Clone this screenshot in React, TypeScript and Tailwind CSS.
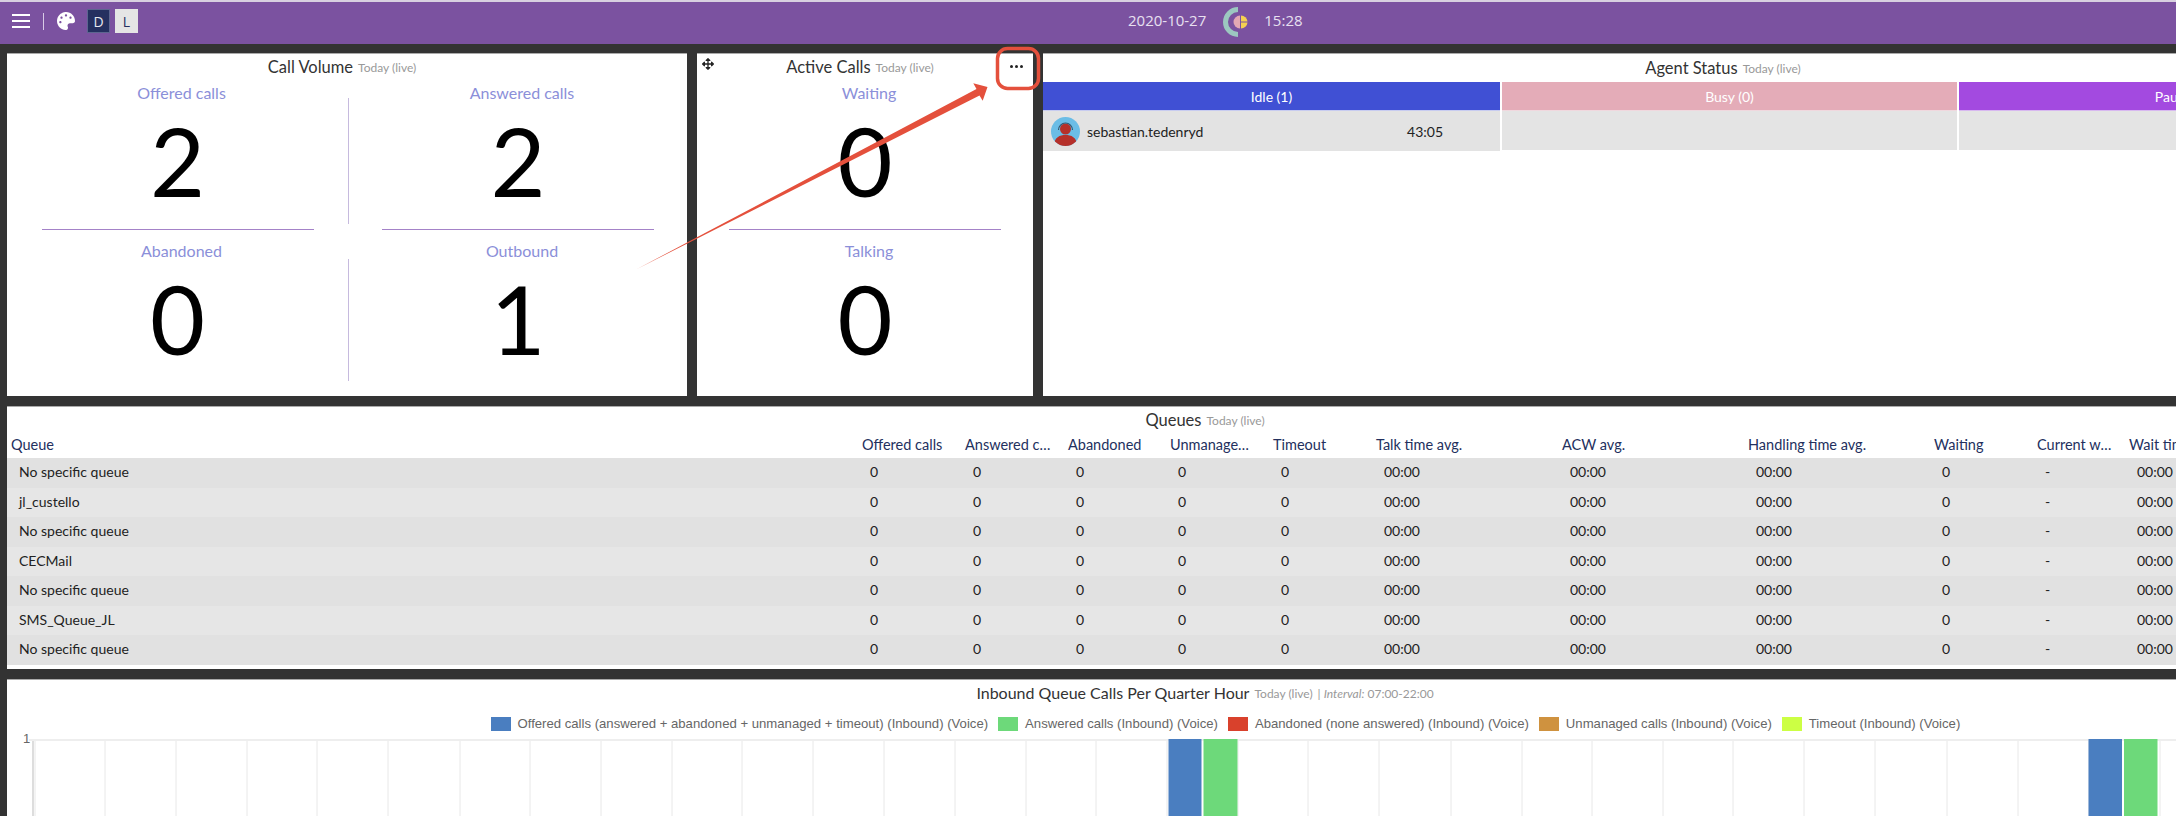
import { FaArrowsAlt, FaPalette } from "react-icons/fa";

const rows = ["No specific queue", "jl_custello", "No specific queue", "CECMail", "No specific queue", "SMS_Queue_JL", "No specific queue"];
const cols = ["Offered calls", "Answered calls", "Abandoned", "Unmanaged calls", "Timeout", "Talk time avg.", "ACW avg.", "Handling time avg.", "Waiting", "Current wait time", "Wait time"];
const vals = ["0", "0", "0", "0", "0", "00:00", "00:00", "00:00", "0", "-", "00:00"];
const gridLines = [35, 105, 176, 247, 317, 388, 460, 530, 601, 672, 742, 813, 884, 955, 1026, 1096, 1167, 1238, 1308, 1379, 1451, 1522, 1592, 1663, 1733, 1804, 1875, 1947, 2018, 2089, 2160];
const legend = [
  { color: "bg-[#4a7ec0]", label: "Offered calls (answered + abandoned + unmanaged + timeout) (Inbound) (Voice)" },
  { color: "bg-[#6dd97a]", label: "Answered calls (Inbound) (Voice)" },
  { color: "bg-[#d9412c]", label: "Abandoned (none answered) (Inbound) (Voice)" },
  { color: "bg-[#cf923f]", label: "Unmanaged calls (Inbound) (Voice)" },
  { color: "bg-[#ccff44]", label: "Timeout (Inbound) (Voice)" },
];

function Title({ name, extra }: { name: string; extra?: boolean }) {
  return (
    <div className="flex h-[26px] items-center justify-center gap-[5px] pr-[10px]">
      <span className={extra ? "text-[16px] text-[#333]" : "text-[16.5px] text-[#333]"}>{name}</span>
      <span className="mt-[2px] text-[12px] text-[#999]">Today (live)</span>
      {extra && (
        <span className="mt-[2px] text-[12px] text-[#999]">
          | <i>Interval:</i> 07:00-22:00
        </span>
      )}
    </div>
  );
}

function Stat({ label, value, lower }: { label: string; value: string; lower?: boolean }) {
  return (
    <div className={lower ? "flex flex-col items-center pt-[8px]" : "flex flex-col items-center"}>
      <div className="flex h-[28px] items-center pb-[2px] pl-2 text-[16px] text-[#8b8fd9]">{label}</div>
      <div className="h-[104px] text-[95px] leading-[104px] text-black">{value}</div>
      {!lower && <div className="mt-[17px] h-px w-[272px] bg-[#a482c8]" />}
    </div>
  );
}

function Logo() {
  return (
    <svg width="26" height="32" viewBox="0 0 26 32">
      <path d="M15 3.5 A12.5 12.5 0 0 0 15 28.5" fill="none" stroke="#9cc7c0" strokeWidth="5" />
      <path d="M17 9.5 A6.5 6.5 0 0 0 17 22.5 Z" fill="#e4a8b4" />
      <path d="M18 9.5 A6.5 6.5 0 0 1 24.5 15.5 L18 15.5 Z" fill="#f5d050" />
      <path d="M18 16.5 L24.5 16.5 A6.5 6.5 0 0 1 18 22.5 Z" fill="#f5d050" />
    </svg>
  );
}

function Avatar() {
  return (
    <svg width="29" height="29" viewBox="0 0 29 29" className="shrink-0">
      <defs>
        <clipPath id="avatar-clip">
          <circle cx="14.5" cy="14.5" r="14.5" />
        </clipPath>
      </defs>
      <g clipPath="url(#avatar-clip)">
        <rect width="29" height="29" fill="#6bbde6" />
        <path d="M3 29 C3 20 9 18 14.5 18 C20 18 26 20 26 29 Z" fill="#b5302a" />
        <circle cx="14.5" cy="12" r="5.5" fill="#b5302a" />
        <path d="M7.5 13 A7 7 0 0 1 21.5 13" fill="none" stroke="#35566e" strokeWidth="1.2" />
      </g>
    </svg>
  );
}

export default function App() {
  return (
    <div className="relative h-[816px] w-[2176px] overflow-hidden bg-[#333] font-['Lato',sans-serif]">
      <header className="flex h-[44px] items-center border-t-2 border-[#d8d0e0] bg-[#7b52a0] pb-[4px]">
        <div className="ml-[12px] flex w-[18px] flex-col gap-[4px]">
          <div className="h-[2px] bg-white" />
          <div className="h-[2px] bg-white" />
          <div className="h-[2px] bg-white" />
        </div>
        <div className="ml-[13px] h-[17px] w-px bg-[#d8cbe6]" />
        <FaPalette className="ml-[13px] text-white" size={18} />
        <div className="ml-[12px] flex h-[24px] w-[23px] items-center justify-center border border-[#5d6590] bg-[#253060] font-['Open_Sans',sans-serif] text-[14px] text-[#e8e8f0]">D</div>
        <div className="ml-[5px] flex h-[24px] w-[23px] items-center justify-center bg-[#e5e5e5] font-['Open_Sans',sans-serif] text-[14px] text-[#253060]">L</div>
        <div className="mb-[2px] ml-[990px] font-['Open_Sans',sans-serif] text-[15px] text-[#e8e0f0]">2020-10-27</div>
        <div className="ml-[17px] mt-[1px]">
          <Logo />
        </div>
        <div className="mb-[2px] ml-[15px] font-['Open_Sans',sans-serif] text-[15px] text-[#e8e0f0]">15:28</div>
      </header>

      <main className="flex flex-col gap-[10px] pl-[7px] pt-[9px]">
        <div className="flex h-[343px] gap-[10px]">
          <section className="w-[680px] shrink-0 border-t border-[#aaa] bg-white">
            <Title name="Call Volume" />
            <div className="grid grid-cols-[341px_1px_338px]">
              <Stat label="Offered calls" value="2" />
              <div className="mt-[18px] h-[126px] bg-[#c6bade]" />
              <Stat label="Answered calls" value="2" />
              <Stat label="Abandoned" value="0" lower />
              <div className="mt-[29px] h-[122px] bg-[#c6bade]" />
              <Stat label="Outbound" value="1" lower />
            </div>
          </section>

          <section className="relative w-[336px] shrink-0 border-t border-[#aaa] bg-white">
            <Title name="Active Calls" />
            <FaArrowsAlt className="absolute left-[5px] top-[4px] text-[#222]" size={12} />
            <div className="absolute left-[313px] top-[11px] flex gap-[2px]">
              <div className="h-[3px] w-[3px] rounded-full bg-[#222]" />
              <div className="h-[3px] w-[3px] rounded-full bg-[#222]" />
              <div className="h-[3px] w-[3px] rounded-full bg-[#222]" />
            </div>
            <Stat label="Waiting" value="0" />
            <Stat label="Talking" value="0" lower />
          </section>

          <section className="w-[1370px] shrink-0 border-t border-[#aaa] bg-white">
            <div className="flex h-[28px] items-center justify-center gap-[5px] pr-[10px]">
              <span className="text-[16.5px] text-[#333]">Agent Status</span>
              <span className="mt-[2px] text-[12px] text-[#999]">Today (live)</span>
            </div>
            <div className="grid grid-cols-[457px_455px_455px] gap-x-[2px] text-[14px]">
              <div className="flex h-[29px] items-center justify-center border-b border-[#c8ccf0] bg-[#4050d4] text-white">Idle (1)</div>
              <div className="flex h-[29px] items-center justify-center border-b border-[#f0d8de] bg-[#e4acb8] text-white">Busy (0)</div>
              <div className="flex h-[29px] items-center justify-center border-b border-[#d8b8f0] bg-[#a34ae0] text-white">Paused (0)</div>
              <div className="flex h-[40px] items-center justify-between bg-[#e3e3e3] pl-[8px] pr-[57px] text-[#222]">
                <div className="flex items-center gap-[7px]">
                  <Avatar />
                  <span>sebastian.tedenryd</span>
                </div>
                <span>43:05</span>
              </div>
              <div className="h-[39px] bg-[#e4e4e4]" />
              <div className="h-[39px] bg-[#e4e4e4]" />
            </div>
          </section>
        </div>

        <section className="h-[263px] w-[2406px] shrink-0 border-t border-[#aaa] bg-white">
          <Title name="Queues" />
          <div className="grid h-[25px] grid-cols-[851px_103px_103px_102px_103px_103px_186px_186px_186px_103px_92px_103px] items-center pb-[2px] text-[14.5px] text-[#23305e]">
            <div className="pl-[4px]">Queue</div>
            {cols.map((c) => (
              <div key={c} className="truncate pl-[4px] pr-[12px]">{c}</div>
            ))}
          </div>
          {rows.map((r, i) => (
            <div
              key={i}
              className={`grid h-[29.5px] grid-cols-[851px_103px_103px_102px_103px_103px_186px_186px_186px_103px_92px_103px] items-center pb-[2px] text-[14px] text-[#222] ${i % 2 === 0 ? "bg-[#e1e1e1]" : "bg-[#e6e6e6]"}`}
            >
              <div className="pl-[12px]">{r}</div>
              {vals.map((v, j) => (
                <div key={j} className="pl-[12px]">{v}</div>
              ))}
            </div>
          ))}
        </section>

        <section className="h-[137px] w-[2406px] shrink-0 border-t border-[#aaa] bg-white">
          <Title name="Inbound Queue Calls Per Quarter Hour" extra />
          <div className="mt-[8px] flex items-center gap-[10px] pl-[483.5px] font-['Liberation_Sans',sans-serif] text-[13.15px] text-[#666]">
            {legend.map((l) => (
              <div key={l.label} className="flex items-center gap-[7px] whitespace-nowrap">
                <div className={`h-[14px] w-[20px] ${l.color}`} />
                <span>{l.label}</span>
              </div>
            ))}
          </div>
          <svg width="2169" height="88" className="-mt-[3px]">
            {gridLines.map((x) => (
              <line key={x} x1={x - 7} y1="8" x2={x - 7} y2="88" stroke="#e8e8e8" />
            ))}
            <line x1="26" y1="8" x2="26" y2="88" stroke="#bbb" />
            <rect x="22" y="8" width="2150" height="2" fill="#eee" />
            <rect x="1161.5" y="8" width="33" height="80" fill="#4a7ec0" />
            <rect x="1196.5" y="8" width="34" height="80" fill="#6dd97a" />
            <rect x="2081.5" y="8" width="33.5" height="80" fill="#4a7ec0" />
            <rect x="2117" y="8" width="33.5" height="80" fill="#6dd97a" />
            <text x="16" y="12" fontSize="13" fill="#666" fontFamily="Liberation Sans, sans-serif">1</text>
          </svg>
        </section>
      </main>

      <svg width="2176" height="816" className="pointer-events-none absolute left-0 top-0">
        <rect x="997.5" y="48.5" width="41" height="40" rx="10" fill="none" stroke="#e4503c" strokeWidth="3.5" />
        <polygon points="637,269 976.5,89 973.3,83.3 987.5,87 982.7,100.7 979.5,95.5" fill="#e4503c" />
      </svg>
    </div>
  );
}
